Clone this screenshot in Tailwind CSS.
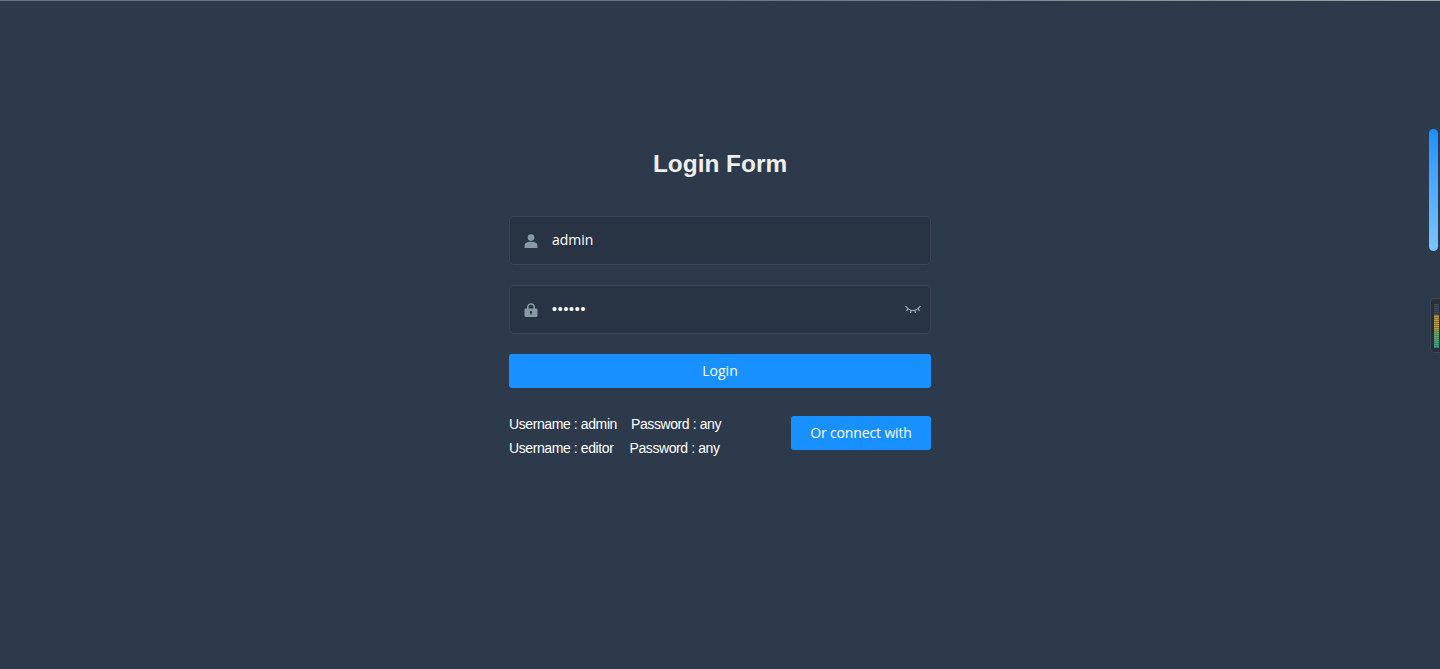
<!DOCTYPE html>
<html lang="en">
<head>
    <meta charset="UTF-8">
    <title>Login Form</title>
    <script src="https://cdn.jsdelivr.net/npm/@tailwindcss/browser@4"></script>
</head>
<body class="bg-[#2d3a4b] h-[669px] overflow-hidden relative font-['Liberation_Sans',sans-serif]">
    <div class="h-px bg-gradient-to-r from-[#6d747d] via-[#6d747d] to-[#a3a7ac]"></div>

    <div class="w-[422px] mx-auto pt-[148px]">
        <h3 class="text-[24.4px] leading-[30px] font-bold text-[#eeeeee] text-center mb-[37px]">Login Form</h3>

        <div class="h-[49px] flex items-center bg-[#283443] border border-[#3a4657] rounded-[5px] mb-[20px]">
            <svg class="w-[14px] h-[14px] ml-[14px] text-[#889aa4]" viewBox="0 0 14 14" fill="currentColor">
                <circle cx="7" cy="3.6" r="3.3"/>
                <path d="M0.6 14 V11.6 C0.6 9.2 3 7.8 7 7.8 C11 7.8 13.4 9.2 13.4 11.6 V14 Z"/>
            </svg>
            <span class="ml-[14px] text-white text-[14px] font-['Open_Sans',sans-serif] -translate-y-px">admin</span>
        </div>

        <div class="h-[49px] flex items-center bg-[#283443] border border-[#3a4657] rounded-[5px] mb-[20px]">
            <svg class="w-[14px] h-[14px] ml-[14px] text-[#889aa4]" viewBox="0 0 14 14" fill="currentColor">
                <path fill-rule="evenodd" d="M3 5.5 V4 C3 1.6 4.8 0.2 7 0.2 C9.2 0.2 11 1.6 11 4 V5.5 H12.2 C13 5.5 13.5 6 13.5 6.8 V12.6 C13.5 13.4 13 14 12.2 14 H1.8 C1 14 0.5 13.4 0.5 12.6 V6.8 C0.5 6 1 5.5 1.8 5.5 Z M4.6 5.5 H9.4 V4 C9.4 2.6 8.4 1.7 7 1.7 C5.6 1.7 4.6 2.6 4.6 4 Z M7 8 C6.3 8 5.8 8.5 5.8 9.2 C5.8 9.7 6.1 10 6.4 10.2 V11.8 H7.6 V10.2 C7.9 10 8.2 9.7 8.2 9.2 C8.2 8.5 7.7 8 7 8 Z"/>
            </svg>
            <span class="ml-[14px] text-white text-[14px] tracking-[0.8px] flex-1 leading-none -translate-y-px">••••••</span>
            <svg class="w-[16px] h-[10px] mr-[9px] text-[#9fb0ba]" viewBox="0 0 16 10" fill="none" stroke="currentColor" stroke-width="1.2">
                <path d="M0.5 1 C3 4.5 5.5 5.5 8 5.5 C10.5 5.5 13 4.5 15.5 1"/>
                <path d="M3 3.6 L1.5 6 M6 5.4 L5.6 8 M10 5.4 L10.4 8 M13 3.6 L14.5 6"/>
            </svg>
        </div>

        <button class="block w-full h-[34px] pb-[2px] bg-[#1890ff] text-white text-[14px] rounded-[3px] mb-[24px] font-['Open_Sans',sans-serif]">Login</button>

        <div class="flex items-start justify-between">
            <div class="text-white text-[14px] leading-[24px] tracking-[-0.4px]">
                <div class="flex gap-[14px]"><span>Username : admin</span><span>Password : any</span></div>
                <div class="flex gap-[16px]"><span>Username : editor</span><span>Password : any</span></div>
            </div>
            <button class="w-[140px] h-[34px] mt-[4px] pb-[2px] bg-[#1890ff] text-white text-[14px] tracking-[-0.14px] rounded-[3px] font-['Open_Sans',sans-serif]">Or connect with</button>
        </div>
    </div>

    <!-- browser extension widgets on the right edge -->
    <div class="absolute left-[1429px] top-[129px] w-[9px] h-[122px] rounded-full bg-gradient-to-b from-[#1890ff] to-[#7cc4ff]"></div>
    <div class="absolute left-[1430px] top-[298px] w-[12px] h-[55px] rounded-l-[4px] bg-[#262f3b] border border-[#3d4756] overflow-hidden pl-[3px] pt-[5px]">
        <div class="relative w-[5px] h-[44px]">
            <div class="h-[11px] bg-[#3d4756]"></div>
            <div class="h-[15px] bg-[#b89a3c]"></div>
            <div class="h-[18px] bg-gradient-to-b from-[#7fa95a] to-[#2fa48a]"></div>
            <div class="absolute inset-0 bg-[repeating-linear-gradient(to_bottom,transparent_0,transparent_1px,#262f3b55_1px,#262f3b55_2px)]"></div>
        </div>
    </div>
</body>
</html>
